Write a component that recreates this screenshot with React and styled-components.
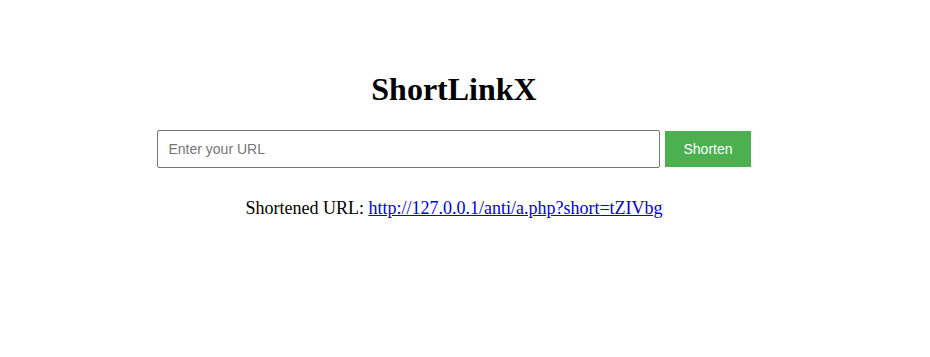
import React from "react";
import styled, { createGlobalStyle } from "styled-components";

const Global = createGlobalStyle`
  body {
    margin: 0;
    background: #fff;
    font-family: "Liberation Serif", "Times New Roman", serif;
  }
`;

const Page = styled.div`
  width: 908px;
  padding-top: 50px;
  text-align: center;
`;

const Title = styled.h1`
  margin: 21.44px 0;
  font-size: 32px;
  font-weight: bold;
`;

const Form = styled.form`
  margin: 0;
`;

const UrlInput = styled.input`
  width: 481px;
  padding: 10px;
  font-family: "Liberation Sans", Arial, sans-serif;
  font-size: 14px;
  border: 1px solid #767676;
  border-radius: 2px;
  vertical-align: middle;
  &::placeholder {
    color: #757575;
  }
`;

const Button = styled.button`
  padding: 10px 18px;
  margin-left: 5px;
  background: #4caf50;
  color: #fff;
  border: none;
  font-family: "Liberation Sans", Arial, sans-serif;
  font-size: 14px;
  vertical-align: middle;
  cursor: pointer;
`;

const Result = styled.p`
  margin: 30px 0 0;
  font-size: 18px;
`;

const Link = styled.a`
  color: #0000ee;
`;

export default function App() {
  return (
    <>
      <Global />
      <Page>
        <Title>ShortLinkX</Title>
        <Form onSubmit={(e) => e.preventDefault()}>
          <UrlInput type="text" placeholder="Enter your URL" />
          <Button type="submit">Shorten</Button>
        </Form>
        <Result>
          Shortened URL:{" "}
          <Link href="http://127.0.0.1/anti/a.php?short=tZIVbg">
            http://127.0.0.1/anti/a.php?short=tZIVbg
          </Link>
        </Result>
      </Page>
    </>
  );
}
